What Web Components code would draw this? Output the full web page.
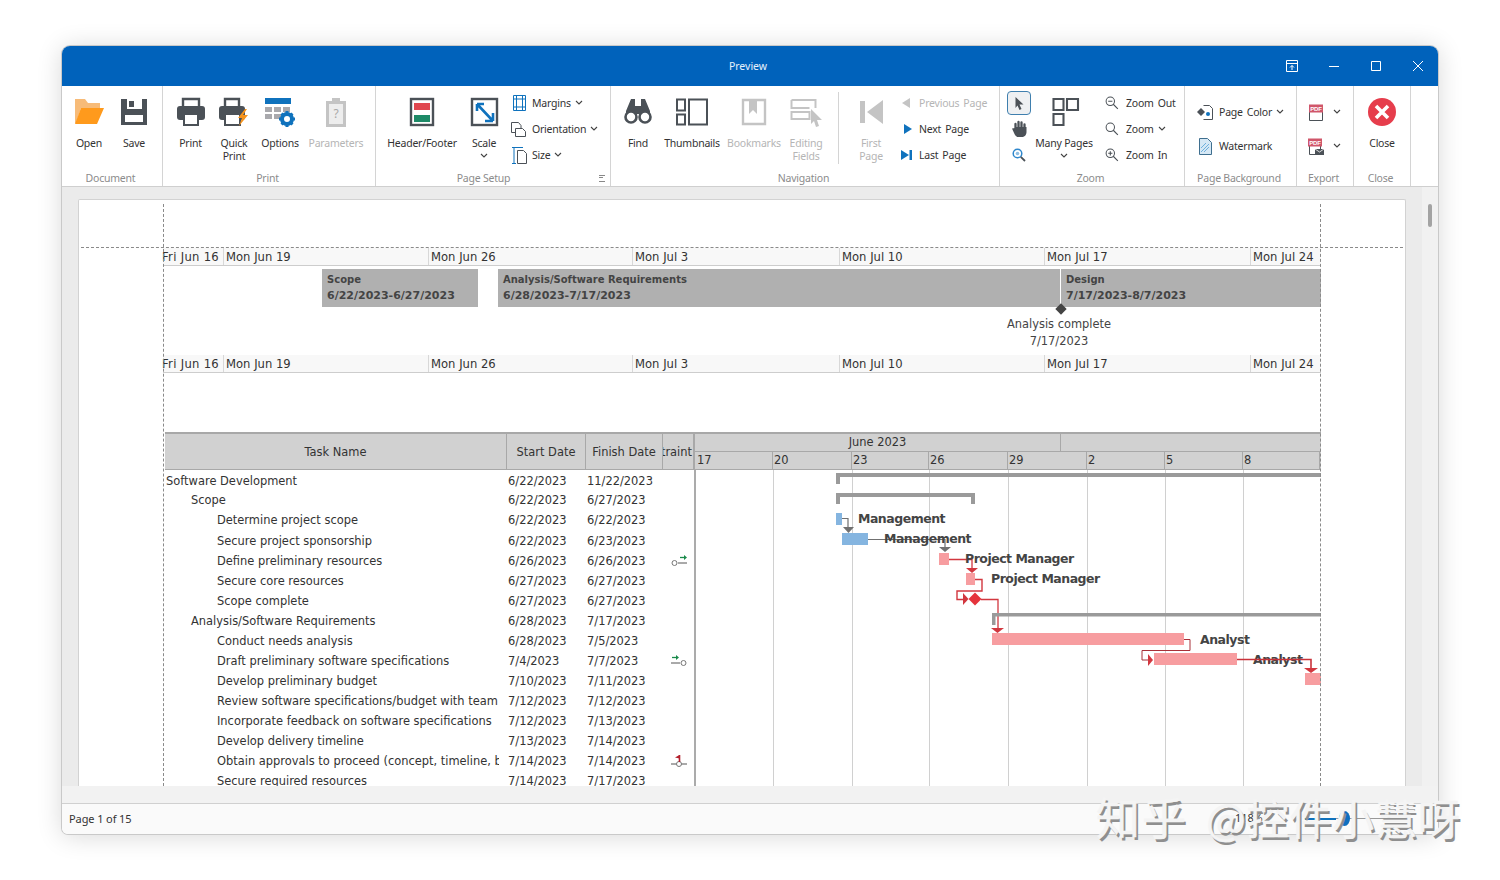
<!DOCTYPE html>
<html>
<head>
<meta charset="utf-8">
<title>Preview</title>
<style>
  html, body { margin: 0; height: 880px; overflow: hidden; background: #fff; }
  body { padding: 46px 62px 0; box-sizing: border-box; font-family: "Noto Sans", sans-serif; }
</style>
</head>
<body>
<app-window>
  <title-bar slot="title">Preview</title-bar>

  <rb-ribbon slot="ribbon">
    <rb-group label="Document" style="width:100px;padding-left:5px">
      <rb-large w="44"><ui-icon name="open"></ui-icon><span slot="label">Open</span></rb-large>
      <rb-large w="46"><ui-icon name="save"></ui-icon><span slot="label">Save</span></rb-large>
    </rb-group>
    <rb-group label="Print" style="width:212px;padding-left:5px">
      <rb-large w="45"><ui-icon name="print"></ui-icon><span slot="label">Print</span></rb-large>
      <rb-large w="42"><ui-icon name="quick"></ui-icon><span slot="label">Quick<br>Print</span></rb-large>
      <rb-large w="50"><ui-icon name="options"></ui-icon><span slot="label">Options</span></rb-large>
      <rb-large w="62" disabled><ui-icon name="params"></ui-icon><span slot="label">Parameters</span></rb-large>
    </rb-group>
    <rb-group label="Page Setup" dialog style="width:234px;padding-left:4px">
      <rb-large w="84"><ui-icon name="headfoot"></ui-icon><span slot="label">Header/Footer</span></rb-large>
      <rb-large w="40" chevron><ui-icon name="scale"></ui-icon><span slot="label">Scale</span></rb-large>
      <rb-stack style="margin-left:5px">
        <rb-small chevron><ui-icon name="margins" size="18"></ui-icon>Margins</rb-small>
        <rb-small chevron><ui-icon name="orient" size="18"></ui-icon>Orientation</rb-small>
        <rb-small chevron><ui-icon name="size" size="18"></ui-icon>Size</rb-small>
      </rb-stack>
    </rb-group>
    <rb-group label="Navigation" style="width:388px;padding-left:8px">
      <rb-large w="38"><ui-icon name="find"></ui-icon><span slot="label">Find</span></rb-large>
      <rb-large w="70"><ui-icon name="thumbs"></ui-icon><span slot="label">Thumbnails</span></rb-large>
      <rb-large w="54" disabled><ui-icon name="bookmarks"></ui-icon><span slot="label">Bookmarks</span></rb-large>
      <rb-large w="50" disabled><ui-icon name="fields"></ui-icon><span slot="label">Editing<br>Fields</span></rb-large>
      <rb-sep></rb-sep>
      <rb-large w="40" disabled><ui-icon name="first"></ui-icon><span slot="label">First<br>Page</span></rb-large>
      <rb-stack style="margin-left:5px">
        <rb-small disabled><ui-icon name="prev" size="18"></ui-icon>Previous Page</rb-small>
        <rb-small><ui-icon name="next" size="18"></ui-icon>Next Page</rb-small>
        <rb-small><ui-icon name="last" size="18"></ui-icon>Last Page</rb-small>
      </rb-stack>
    </rb-group>
    <rb-group label="Zoom" style="width:184px;padding-left:7px">
      <rb-stack>
        <rb-tool active><ui-icon name="cursor" size="18"></ui-icon></rb-tool>
        <rb-tool><ui-icon name="hand" size="18"></ui-icon></rb-tool>
        <rb-tool><ui-icon name="zoomtool" size="18"></ui-icon></rb-tool>
      </rb-stack>
      <rb-large w="64" chevron style="margin-left:1px"><ui-icon name="many"></ui-icon><span slot="label">Many Pages</span></rb-large>
      <rb-stack style="margin-left:7px">
        <rb-small><ui-icon name="zoomout" size="18"></ui-icon>Zoom Out</rb-small>
        <rb-small chevron><ui-icon name="zoom" size="18"></ui-icon>Zoom</rb-small>
        <rb-small><ui-icon name="zoomin" size="18"></ui-icon>Zoom In</rb-small>
      </rb-stack>
    </rb-group>
    <rb-group label="Page Background" style="width:111px;padding-left:11px">
      <rb-stack two>
        <rb-small chevron><ui-icon name="pagecolor" size="18"></ui-icon>Page Color</rb-small>
        <rb-small><ui-icon name="watermark" size="18"></ui-icon>Watermark</rb-small>
      </rb-stack>
    </rb-group>
    <rb-group label="Export" style="width:56px;padding-left:9px">
      <rb-stack two>
        <rb-small chevron wide><ui-icon name="pdf" size="18"></ui-icon></rb-small>
        <rb-small chevron wide><ui-icon name="pdfmail" size="18"></ui-icon></rb-small>
      </rb-stack>
    </rb-group>
    <rb-group label="Close" style="width:56px;padding-left:3px">
      <rb-large w="50"><ui-icon name="close"></ui-icon><span slot="label">Close</span></rb-large>
    </rb-group>
  </rb-ribbon>

  <doc-view slot="view">
    <report-page>
      <time-band></time-band>
      <summary-band></summary-band>
      <time-band></time-band>
      <gantt-sheet></gantt-sheet>
    </report-page>
  </doc-view>

  <status-bar slot="status">Page 1 of 15</status-bar>
</app-window>
<zh-watermark><span>知乎</span> @控件小慧呀</zh-watermark>

<script>
const DARK = "#4b5157", OFF = "#c4c4c4", BLUE = "#0f72bd";
const SHRINK = (s) => `<g transform="translate(1 1) scale(.84)">${s}</g>`;

const ICONS = {
  open: `<path d="M2 3h10l3 4h12v5H8L3 27H2z" fill="#f7bb78"/><path d="M8 12h23l-7 16H2z" fill="#ff9a1c"/>`,
  save: `<path fill-rule="evenodd" d="M3 3h26v26H3zM9 3v10h15V3zM7 19v7h18v-7z" fill="${DARK}"/><path d="M11 5h5v6h-5z" fill="${DARK}"/>`,
  print: `<path d="M8 11V3h16v8" fill="none" stroke="${DARK}" stroke-width="2.4"/><rect x="2" y="10" width="28" height="14" rx="3" fill="${DARK}"/><rect x="9" y="18" width="14" height="11" fill="#fff" stroke="${DARK}" stroke-width="2"/>`,
  quick: `<path d="M7 11V3h14v8" fill="none" stroke="${DARK}" stroke-width="2.4"/><rect x="1" y="10" width="26" height="14" rx="3" fill="${DARK}"/><rect x="7" y="18" width="15" height="11" fill="#fff" stroke="${DARK}" stroke-width="2"/><path d="M27 13l-7 9h4l-3 8 9-11h-5l4-6z" fill="#f7941d"/>`,
  options: `<rect x="1" y="2" width="26" height="6" fill="${BLUE}"/><path d="M1 11h7v5H1zM10 11h7v5h-7zM19 11h7v5h-7zM1 18h7v5H1zM10 18h7v5h-7z" fill="#a9a9ad"/><g transform="translate(23 23)"><circle r="5" fill="none" stroke="${BLUE}" stroke-width="4"/><path d="M-1.500-8h3v3h-3zM-1.500 5h3v3h-3zM-8-1.500h3v3h-3zM5-1.500h3v3H5zM-6.500-4.500l2-2 2 2-2 2zM4.500-6.500l2 2-2 2-2-2zM-6.500 4.500l2 2 2-2-2-2zM4.500 6.500l2-2-2-2-2 2z" fill="${BLUE}"/></g>`,
  params: `<path d="M6 5h6V2h8v3h6v26H6z" fill="${OFF}"/><path d="M9 8h14v20H9z" fill="#ededed"/><text x="16" y="22" font-size="12" text-anchor="middle" fill="#a8a8a8" font-family="Noto Sans">?</text>`,
  headfoot: `<rect x="5" y="3" width="22" height="26" fill="#fff" stroke="${DARK}" stroke-width="2.4"/><rect x="8" y="7" width="16" height="7" fill="#e0474f"/><rect x="8" y="19" width="16" height="7" fill="#1d8a67"/>`,
  scale: `<rect x="4" y="3" width="25" height="26" fill="#fff" stroke="${DARK}" stroke-width="2.4"/><path d="M9 8l16 17M9 8v7M9 8h7M25 25v-8M25 25h-8" fill="none" stroke="${BLUE}" stroke-width="2.6"/>`,
  margins: `<path d="M4.500 1.500h12v15h-12zM4.500 5h12M4.500 13h12M7.500 1.500v15M13.500 1.500v15" fill="none" stroke="${BLUE}" stroke-width="1"/>`,
  orient: `<path d="M2.500 2.500h7l2.500 3v3M2.500 2.500v10h4" fill="none" stroke="${DARK}"/><path d="M6.500 8.500h7l3 3v5h-10z" fill="#fff" stroke="${DARK}"/>`,
  size: `<path d="M3 1.500h11M3 17.500h4M5 1.500v16" fill="none" stroke="${BLUE}"/><path d="M8.500 4.500h6l3 3v10h-9z" fill="#fff" stroke="${DARK}"/>`,
  find: `<path d="M9 3h4v7h6V3h4l5 12v3H4v-3z" fill="${DARK}"/><circle cx="9" cy="21" r="5.500" fill="#fff" stroke="${DARK}" stroke-width="2.6"/><circle cx="23" cy="21" r="5.500" fill="#fff" stroke="${DARK}" stroke-width="2.6"/><path d="M13 10h6v6h-6z" fill="${DARK}"/>`,
  thumbs: `<path d="M1 2.500h8v11H1zM1 17.500h8v10H1zM13 2.500h18v25H13z" fill="none" stroke="${DARK}" stroke-width="2" transform="translate(0 1)"/>`,
  bookmarks: `<path d="M5 4h22v24H5z" fill="none" stroke="${OFF}" stroke-width="2.4"/><path d="M11 3h8v15l-4-4-4 4z" fill="${OFF}"/>`,
  fields: `<path d="M1.500 4h24v8M1.500 4v8h18M1.500 16h18v7h-18z" fill="none" stroke="${OFF}" stroke-width="2"/><path d="M21 13l11 11-5 0 2 6-3 1-2-6-3 3z" fill="${OFF}"/>`,
  first: `<path d="M5 5h5v22H5zM28 4v24L12 16z" fill="${OFF}"/>`,
  prev: `<path d="M14 4v10L6 9z" fill="${OFF}"/>`,
  next: `<path d="M8 4v10l8-5z" fill="${BLUE}"/>`,
  last: `<path d="M5 4v10l8-5z" fill="${BLUE}"/><rect x="13.500" y="4" width="2.500" height="10" fill="${BLUE}"/>`,
  cursor: `<path d="M5.500 3l8 7.500H9.500l2 4.500-2 1-2-4.500-2 2.500z" fill="${DARK}"/>`,
  hand: `<path d="M5.500 8V4M8.500 8V2M11.500 8V2.500M14.500 9V4.500" stroke="${DARK}" stroke-width="2.300" stroke-linecap="round"/><path d="M2 8.500l3-.5V7h11.500v5c0 3-2 5-5 5H8.500c-2 0-3-1-4-3z" fill="${DARK}"/>`,
  zoomtool: `<circle cx="7.500" cy="7.500" r="4.300" fill="none" stroke="#2f87cc" stroke-width="1.500"/><circle cx="7.500" cy="7.500" r="1.800" fill="#8dbde2"/><path d="M10.800 10.800l4.200 4.200" stroke="${DARK}" stroke-width="1.800"/>`,
  many: `<path d="M5.500 3h10v11h-10zM19 3h11v11H19zM5.500 18h10v11h-10z" fill="none" stroke="${DARK}" stroke-width="2.100"/>`,
  zoomout: SHRINK(`<circle cx="7.500" cy="7.500" r="5" fill="none" stroke="${DARK}" stroke-width="1.200"/><path d="M5 7.500h5M11 11l5.500 5.500" stroke="${DARK}" stroke-width="1.300"/>`),
  zoom: SHRINK(`<circle cx="7.500" cy="7.500" r="5" fill="none" stroke="${DARK}" stroke-width="1.200"/><path d="M11 11l5.500 5.500" stroke="${DARK}" stroke-width="1.300"/>`),
  zoomin: SHRINK(`<circle cx="7.500" cy="7.500" r="5" fill="none" stroke="${DARK}" stroke-width="1.200"/><path d="M5 7.500h5M7.500 5v5M11 11l5.500 5.500" stroke="${DARK}" stroke-width="1.300"/>`),
  pagecolor: `<path d="M7.500 2.500h6l3 3v11h-9" fill="#fff" stroke="${DARK}"/><path d="M1 9l4-4 4 4-4 4z" fill="${DARK}"/><circle cx="12" cy="11" r="2" fill="${BLUE}"/>`,
  watermark: `<path d="M3.500 1.500h8l4 4v12h-12z" fill="#d6e8f5" stroke="#3f6f8f"/><path d="M5 15l8-8M5 11l5-5M8 15l5-5" stroke="#6fb0dc"/>`,
  pdf: `<path d="M3.500 5.500h13v12h-13z" fill="#fff" stroke="${DARK}"/><rect x="3" y="1.500" width="14" height="8" fill="#d0566a"/><text x="10" y="8.300" font-size="6" font-weight="700" text-anchor="middle" fill="#fff" font-family="Liberation Sans">PDF</text>`,
  pdfmail: `<path d="M3.500 5.500h11v12h-11z" fill="#fff" stroke="${DARK}"/><rect x="2" y="1.500" width="14" height="8" fill="#d0566a"/><text x="9" y="8.300" font-size="6" font-weight="700" text-anchor="middle" fill="#fff" font-family="Liberation Sans">PDF</text><rect x="9" y="12" width="9" height="6" fill="${DARK}"/><path d="M9 12l4.500 3 4.500-3" fill="none" stroke="#fff" stroke-width=".8"/>`,
  close: `<circle cx="16" cy="16" r="14" fill="#e63d4c"/><path d="M10 10l12 12M22 10L10 22" stroke="#fff" stroke-width="3.600"/>`,
};

class UIIcon extends HTMLElement {
  connectedCallback() {
    const name = this.getAttribute("name");
    const size = this.getAttribute("size") || 32;
    this.attachShadow({ mode: "open" }).innerHTML = `
      <style>:host { display: block; width: ${size}px; height: ${size}px; flex: none; } svg { display: block; }</style>
      <svg width="${size}" height="${size}" viewBox="0 0 ${size} ${size}">${ICONS[name] || ""}</svg>`;
  }
}

const CHEVRON = `<svg width="8" height="6" viewBox="0 0 8 6"><path d="M1 1l3 3 3-3" fill="none" stroke="#444" stroke-width="1.100"/></svg>`;

class AppWindow extends HTMLElement {
  constructor() {
    super();
    this.attachShadow({ mode: "open" }).innerHTML = `
      <style>
        :host {
          display: flex; flex-direction: column; width: 1376px; height: 788px;
          border-radius: 8px 8px 6px 6px; background: #fff; overflow: hidden;
          box-shadow: 0 0 0 1px #c9c9c9, 0 2px 26px rgba(0,0,0,.16);
        }
        .view { flex: 1; min-height: 0; display: flex; }
        .hbar { height: 17px; background: #f2f2f2; border-bottom: 1px solid #d0d0d0; flex: none; }
      </style>
      <slot name="title"></slot>
      <slot name="ribbon"></slot>
      <div class="view"><slot name="view"></slot></div>
      <div class="hbar"></div>
      <slot name="status"></slot>`;
  }
}

class TitleBar extends HTMLElement {
  constructor() {
    super();
    this.attachShadow({ mode: "open" }).innerHTML = `
      <style>
        :host {
          display: flex; align-items: center; height: 40px; flex: none; background: #0062bb;
          color: #e6f1fb; font: 10.500px "Noto Sans", sans-serif; position: relative;
        }
        .t { flex: 1; text-align: center; padding-right: 4px; }
        .btns { position: absolute; right: -1px; top: 0; height: 40px; display: flex; align-items: center; }
        .btns span { width: 42px; display: flex; justify-content: center; }
        .btns span:first-child { width: 43px; }
        svg { display: block; }
      </style>
      <div class="t"><slot></slot></div>
      <div class="btns">
        <span><svg width="12" height="12" viewBox="0 0 12 12" fill="none" stroke="#fff"><path d="M.5.5h11v11H.5zM.5 3.500h11M6 10V5.500M4 7.500l2-2 2 2"/></svg></span>
        <span><svg width="12" height="12" viewBox="0 0 12 12" stroke="#fff"><path d="M1 6.500h10"/></svg></span>
        <span><svg width="12" height="12" viewBox="0 0 12 12" fill="none" stroke="#fff"><path d="M1.500 1.500h9v9h-9z"/></svg></span>
        <span><svg width="12" height="12" viewBox="0 0 12 12" stroke="#fff"><path d="M1 1l10 10M11 1L1 11"/></svg></span>
      </div>`;
  }
}

class RbRibbon extends HTMLElement {
  constructor() {
    super();
    this.attachShadow({ mode: "open" }).innerHTML = `
      <style>
        :host {
          display: flex; height: 100px; flex: none; background: #fff; border-bottom: 1px solid #cfcfcf;
          color: #333; font: 10.500px/13px "Noto Sans", sans-serif; letter-spacing: -.22px;
        }
      </style><slot></slot>`;
  }
}

class RbGroup extends HTMLElement {
  constructor() {
    super();
    const dialog = this.hasAttribute("dialog");
    this.attachShadow({ mode: "open" }).innerHTML = `
      <style>
        :host {
          display: flex; flex-direction: column; flex: none; position: relative;
          border-right: 1px solid #d4d4d4; box-sizing: content-box;
        }
        .body { flex: 1; display: flex; align-items: stretch; min-height: 0; }
        .cap { height: 16px; margin-left: calc(-1 * var(--pl, 0px)); padding-right: ${dialog ? 19 : 3}px; text-align: center; color: #8c8c8c; line-height: 17px; }
        .dlg { position: absolute; right: 5px; bottom: 4px; width: 6px; height: 5px;
          border-top: 1px solid #888; border-bottom: 1px solid #888; }
        .dlg::after { content: ""; display: block; height: 1px; width: 4px; background: #888; margin-top: 1px; }
      </style>
      <div class="body"><slot></slot></div>
      <div class="cap">${this.getAttribute("label")}</div>
      ${dialog ? '<div class="dlg"></div>' : ""}`;
  }
  connectedCallback() {
    // the caption is centred on the whole group, padding included
    const pl = this.style.paddingLeft;
    if (pl) this.shadowRoot.querySelector(".cap").style.setProperty("--pl", pl);
    const w = parseInt(this.style.width);
    if (pl && w) this.style.width = (w - parseInt(pl)) + "px";
  }
}

class RbLarge extends HTMLElement {
  constructor() {
    super();
    const w = this.getAttribute("w");
    this.attachShadow({ mode: "open" }).innerHTML = `
      <style>
        :host { display: flex; flex-direction: column; align-items: center; width: ${w}px; flex: none;
          padding-top: 10px; box-sizing: border-box; text-align: center; white-space: nowrap; }
        :host([disabled]) { color: #b5b5b5; }
        .lb { margin-top: 9px; }
        .ch { height: 12px; display: flex; align-items: center; justify-content: center; }
      </style>
      <slot></slot>
      <div class="lb"><slot name="label"></slot></div>
      ${this.hasAttribute("chevron") ? `<div class="ch">${CHEVRON}</div>` : ""}`;
  }
}

class RbStack extends HTMLElement {
  constructor() {
    super();
    this.attachShadow({ mode: "open" }).innerHTML = `
      <style>
        :host { display: flex; flex-direction: column; padding-top: 4px; flex: none; }
        :host([two]) { padding-top: 13px; gap: 8px; }
      </style><slot></slot>`;
  }
}

class RbSmall extends HTMLElement {
  constructor() {
    super();
    this.attachShadow({ mode: "open" }).innerHTML = `
      <style>
        :host { display: flex; align-items: center; height: 26px; gap: 5px; white-space: nowrap; word-spacing: 1.500px; }
        :host([disabled]) { color: #b5b5b5; }
        .ch { margin-left: -1px; display: block; height: 6px; }
        :host([wide]) .ch { margin-left: 4px; }
        svg { display: block; }
      </style>
      <slot></slot>${this.hasAttribute("chevron") ? `<span class="ch">${CHEVRON}</span>` : ""}`;
  }
}

class RbTool extends HTMLElement {
  constructor() {
    super();
    this.attachShadow({ mode: "open" }).innerHTML = `
      <style>
        :host { display: flex; align-items: center; justify-content: center; width: 24px; height: 26px; box-sizing: border-box; }
        :host([active]) { background: #eef0f2; border: 1px solid #3f7fae; border-radius: 4px; height: 24px; margin-top: 1px; margin-bottom: 1px; }
      </style><slot></slot>`;
  }
}

class RbSep extends HTMLElement {
  constructor() {
    super();
    this.attachShadow({ mode: "open" }).innerHTML = `
      <style>:host { display: block; width: 1px; height: 72px; margin: 6px 12px 0 7px; background: #d4d4d4; flex: none; }</style>`;
  }
}

class DocView extends HTMLElement {
  constructor() {
    super();
    this.attachShadow({ mode: "open" }).innerHTML = `
      <style>
        :host { display: flex; flex: 1; min-width: 0; height: 100%; background: #ebebeb; box-sizing: border-box; padding: 12px 0 0 16px; overflow: hidden; }
        .sb { width: 16px; margin-left: auto; margin-top: -12px; background: #f1f1f1; flex: none; position: relative; }
        .th { position: absolute; left: 6px; top: 17px; width: 4px; height: 23px; background: #a3a3a3; border-radius: 2px; }
      </style>
      <slot></slot>
      <div class="sb"><div class="th"></div></div>`;
  }
}

class ReportPage extends HTMLElement {
  constructor() {
    super();
    this.attachShadow({ mode: "open" }).innerHTML = `
      <style>
        :host {
          display: block; position: relative; width: 1328px; box-sizing: border-box; flex: none;
          background: #fff; border: 1px solid #d2d2d2; border-bottom: 0; border-radius: 2px 2px 0 0;
          padding: 48px 0 0 84px; overflow: hidden;
          color: #333; font: 11.450px "DejaVu Sans", sans-serif;
        }
        .inner { width: 1158px; }
        .mx { position: absolute; top: 4px; bottom: 0; border-left: 1px dashed #8a8a8a; }
        .my { position: absolute; left: 2px; right: 2px; top: 47px; border-top: 1px dashed #8a8a8a; }
      </style>
      <div class="inner"><slot></slot></div>
      <div class="mx" style="left:84px"></div>
      <div class="mx" style="left:1241px"></div>
      <div class="my"></div>`;
  }
}

class TimeBand extends HTMLElement {
  constructor() {
    super();
    const cells = [["Fri Jun 16", 61], ["Mon Jun 19", 205], ["Mon Jun 26", 204], ["Mon Jul 3", 207],
      ["Mon Jul 10", 205], ["Mon Jul 17", 206], ["Mon Jul 24", 70]];
    this.attachShadow({ mode: "open" }).innerHTML = `
      <style>
        :host { display: flex; height: 18px; box-sizing: border-box; background: #f8f8f8; border-bottom: 1px solid #cdcdcd; line-height: 18px; color: #333; font-size: 11.600px; }
        div { box-sizing: border-box; padding-left: 2px; border-left: 1px solid #d8d8d8; white-space: nowrap; overflow: hidden; }
        style + div { border-left: 0; padding-left: 0; margin-left: -1px; letter-spacing: .3px; }
      </style>
      ${cells.map(([t, w]) => `<div style="width:${w}px">${t}</div>`).join("")}`;
  }
}

class SummaryBand extends HTMLElement {
  constructor() {
    super();
    const bars = [
      ["Scope", "6/22/2023-6/27/2023", 159, 156],
      ["Analysis/Software Requirements", "6/28/2023-7/17/2023", 335, 562],
      ["Design", "7/17/2023-8/7/2023", 898, 260],
    ];
    this.attachShadow({ mode: "open" }).innerHTML = `
      <style>
        :host { display: block; position: relative; height: 86px; margin-top: 3px; }
        .b { position: absolute; top: 0; height: 38px; background: #b0b0b0; color: #444; font-weight: 700;
          font-size: 11px; line-height: 16px; padding: 3px 0 0 5px; box-sizing: border-box; white-space: nowrap; overflow: hidden; }
        .b span { font-size: 10px; }
        .d { position: absolute; left: 894px; top: 36px; width: 8px; height: 8px; background: #444; transform: rotate(45deg); }
        .m { position: absolute; left: 796px; width: 200px; top: 47px; text-align: center; line-height: 17px; color: #444; }
      </style>
      ${bars.map(([a, b, x, w]) => `<div class="b" style="left:${x}px;width:${w}px"><span>${a}</span><br>${b}</div>`).join("")}
      <div class="d"></div>
      <div class="m">Analysis complete<br>7/17/2023</div>`;
  }
}

const TASKS = [
  [0, "Software Development", "6/22/2023", "11/22/2023", 20],
  [1, "Scope", "6/22/2023", "6/27/2023", 18.5],
  [2, "Determine project scope", "6/22/2023", "6/22/2023", 20.5],
  [2, "Secure project sponsorship", "6/22/2023", "6/23/2023", 21],
  [2, "Define preliminary resources", "6/26/2023", "6/26/2023", 20, "snet"],
  [2, "Secure core resources", "6/27/2023", "6/27/2023", 20],
  [2, "Scope complete", "6/27/2023", "6/27/2023", 20],
  [1, "Analysis/Software Requirements", "6/28/2023", "7/17/2023", 20],
  [2, "Conduct needs analysis", "6/28/2023", "7/5/2023", 20],
  [2, "Draft preliminary software specifications", "7/4/2023", "7/7/2023", 20, "fnet"],
  [2, "Develop preliminary budget", "7/10/2023", "7/11/2023", 20],
  [2, "Review software specifications/budget with team", "7/12/2023", "7/12/2023", 20],
  [2, "Incorporate feedback on software specifications", "7/12/2023", "7/13/2023", 20],
  [2, "Develop delivery timeline", "7/13/2023", "7/14/2023", 20],
  [2, "Obtain approvals to proceed (concept, timeline, budget)", "7/14/2023", "7/14/2023", 20, "must"],
  [2, "Secure required resources", "7/14/2023", "7/17/2023", 20],
];

const CONSTRAINTS = {
  snet: `<path d="M8 9h9" stroke="#555"/><circle cx="4.500" cy="9" r="2.500" fill="#fff" stroke="#777"/><path d="M10 3.500h5" stroke="#1a8a4a" stroke-width="1.300"/><path d="M14 1l3 2.500-3 2.500z" fill="#1a8a4a"/>`,
  fnet: `<path d="M1 9h9" stroke="#555"/><circle cx="13.500" cy="9" r="2.500" fill="#fff" stroke="#777"/><path d="M2 3.500h5" stroke="#1a8a4a" stroke-width="1.300"/><path d="M6 1l3 2.500L6 6z" fill="#1a8a4a"/>`,
  must: `<path d="M1 10h16" stroke="#555"/><circle cx="9" cy="10" r="2.500" fill="#fff" stroke="#777"/><path d="M9.500 1v7" stroke="#b3202c" stroke-width="1.600"/><path d="M9.500 1L5 3.500l4.500 1z" fill="#b3202c"/>`,
};

class GanttSheet extends HTMLElement {
  constructor() {
    super();
    const days = [["17", 78], ["20", 79], ["23", 77], ["26", 79], ["29", 79], ["2", 78], ["5", 78], ["8", 77]];
    const lines = [773, 852, 929, 1008, 1087, 1165, 1243];
    const pink = "#f79da0", blue = "#85b5e0", red = "#d2373f", gray = "#707070", sum = "#9a9a9a";
    const bar = (x, y, w, h, c) => `<rect x="${x}" y="${y}" width="${w}" height="${h}" fill="${c}"/>`;
    const tri = (pts, c) => `<polygon points="${pts}" fill="${c}"/>`;
    const link = (d, c, sw) => `<path d="${d}" fill="none" stroke="${c}" stroke-width="${sw}"/>`;
    const lbl = (x, y, t) => `<text x="${x}" y="${y}" font-family="DejaVu Sans" font-weight="700" font-size="12.500" letter-spacing="-.5" fill="#444">${t}</text>`;
    this.attachShadow({ mode: "open" }).innerHTML = `
      <style>
        :host { display: block; margin-top: 59px; }
        .head { display: flex; height: 38px; box-sizing: border-box; background: #d1d1d1; border-top: 2px solid #a8a8a8; border-bottom: 1px solid #a8a8a8; margin-left: 2px; }
        .hc { box-sizing: border-box; border-right: 1px solid #a8a8a8; display: flex; align-items: center; justify-content: center; white-space: nowrap; overflow: hidden; flex: none; }
        .hc.tr { justify-content: flex-end; padding-right: 1px; border-right: 2px solid #a8a8a8; }
        .cal { flex: 1; display: flex; flex-direction: column; }
        .mon { height: 17px; display: flex; border-bottom: 1px solid #a8a8a8; line-height: 17px; box-sizing: content-box; flex: none; }
        .mon div { text-align: center; }
        .mon div:first-child { width: 365px; border-right: 1px solid #a8a8a8; }
        .daysrow { flex: 1; display: flex; line-height: 17px; }
        .daysrow div { box-sizing: border-box; padding-left: 1px; border-right: 1px solid #a8a8a8; }
        .daysrow div:first-child { padding-left: 2px; }
        .body { display: flex; }
        .tbl { width: 531px; flex: none; padding-top: 1px; box-sizing: border-box; }
        .row { display: grid; grid-template-columns: 342px 79px 77px 32px; align-items: center; white-space: nowrap; }
        .row .name { overflow: hidden; margin-right: 6px; }
        .row svg { display: block; margin: 0 0 0 9px; }
        .chart { display: block; flex: none; }
      </style>
      <div class="head">
        <div class="hc" style="width:342px">Task Name</div>
        <div class="hc" style="width:79px">Start Date</div>
        <div class="hc" style="width:77px">Finish Date</div>
        <div class="hc tr" style="width:32px">traint</div>
        <div class="cal">
          <div class="mon"><div>June 2023</div><div></div></div>
          <div class="daysrow">${days.map(([d, w]) => `<div style="width:${w}px">${d}</div>`).join("")}</div>
        </div>
      </div>
      <div class="body">
        <div class="tbl">
          ${TASKS.map(([lvl, name, s, f, h, c]) => `
            <div class="row" style="height:${h}px">
              <div class="name" style="padding-left:${[3, 28, 54][lvl]}px">${name}</div>
              <div style="padding-left:3px">${s}</div>
              <div style="padding-left:3px">${f}</div>
              <div>${c ? `<svg width="18" height="14" viewBox="0 0 18 14">${CONSTRAINTS[c]}</svg>` : ""}</div>
            </div>`).join("")}
        </div>
        <svg class="chart" width="627" height="330" viewBox="694 470 627 330">
          <rect x="694" y="470" width="2" height="330" fill="#ababab"/>
          ${lines.map(x => `<rect x="${x}" y="470" width="1" height="330" fill="#d0d0d0"/>`).join("")}

          ${bar(836, 473, 485, 4, sum)}${bar(836, 473, 4, 11, sum)}
          ${bar(836, 493, 139, 4, sum)}${bar(836, 493, 4, 11, sum)}${bar(971, 493, 4, 11, sum)}

          ${bar(836, 513, 6, 12, blue)}
          ${link("M842 518.500h6v9", gray, 1.200)}${tri("843,527 854,527 848.500,533", gray)}
          ${bar(842, 533, 26, 12, blue)}
          ${lbl(858, 523, "Management")}
          ${link("M868 539.500h77v8", gray, 1.200)}${tri("939,547 951,547 945,552", gray)}
          ${lbl(884, 543, "Management")}

          ${bar(939, 553, 10, 12, pink)}
          ${link("M949 559.500h23v9", red, 1.300)}${tri("966,568 978,568 972,573", red)}
          ${lbl(965, 563, "Project Manager")}
          ${bar(966, 573, 9, 12, pink)}
          ${lbl(991, 583, "Project Manager")}
          ${link("M975 579.500h7v11.500h-25v8.500h6", red, 1.400)}${tri("963,593 968.500,599 963,605", red)}
          ${tri("975,592.500 981.500,599 975,605.500 968.500,599", "#e5343c")}
          ${link("M981 599.500h17v29", red, 1.300)}${tri("991,628 1004,628 997.500,633", red)}

          ${bar(992, 613, 329, 3.500, sum)}${bar(992, 613, 3.500, 12, sum)}

          ${bar(992, 633, 192, 12, pink)}
          ${lbl(1200, 644, "Analyst")}
          ${link("M1184 639.500h6v11h-48v9.500h7", "#a83038", 1)}${tri("1148,654 1153,660 1148,666", red)}
          ${bar(1154, 653, 83, 12, pink)}
          ${lbl(1253, 664, "Analyst")}
          ${link("M1237 659.500h74v9", "#c9323a", 1.600)}${tri("1304,668 1318,668 1311,673", red)}
          ${bar(1305, 673, 16, 12, pink)}
        </svg>
      </div>`;
  }
}

class StatusBar extends HTMLElement {
  constructor() {
    super();
    this.attachShadow({ mode: "open" }).innerHTML = `
      <style>
        :host { display: flex; align-items: center; height: 30px; box-sizing: border-box; flex: none; padding: 0 0 2px 7px; position: relative; background: #fafafa; color: #333; font: 11px "Noto Sans", sans-serif; letter-spacing: -.1px; }
        .z { position: absolute; left: 1173px; top: 6px; font-size: 11px; }
        .tr { position: absolute; left: 1243px; top: 14px; width: 80px; height: 1px; background: #999; }
        .fill { position: absolute; left: 1243px; top: 14px; width: 31px; height: 2px; background: #0f72bd; }
        .th { position: absolute; left: 1277px; top: 7px; width: 11px; height: 15px; border-radius: 50%; background: #0f6fbf; }
      </style>
      <slot></slot>
      <span class="z">118%</span><div class="tr"></div><div class="fill"></div><div class="th"></div>`;
  }
}

class ZhWatermark extends HTMLElement {
  constructor() {
    super();
    this.attachShadow({ mode: "open" }).innerHTML = `
      <style>
        :host {
          position: absolute; left: 1096px; top: 786px; white-space: nowrap; word-spacing: 8px; letter-spacing: .8px;
          font: 400 42px/60px "Noto Sans CJK SC", sans-serif; color: #f4f4f4;
          -webkit-text-stroke: .4px #f4f4f4; text-shadow: 2px 3px 0 #8f8f8f;
        }
        ::slotted(span) { font-size: 44px; letter-spacing: 2px; }
      </style><slot></slot>`;
  }
}

customElements.define("ui-icon", UIIcon);
customElements.define("app-window", AppWindow);
customElements.define("title-bar", TitleBar);
customElements.define("rb-ribbon", RbRibbon);
customElements.define("rb-group", RbGroup);
customElements.define("rb-large", RbLarge);
customElements.define("rb-stack", RbStack);
customElements.define("rb-small", RbSmall);
customElements.define("rb-tool", RbTool);
customElements.define("rb-sep", RbSep);
customElements.define("doc-view", DocView);
customElements.define("report-page", ReportPage);
customElements.define("time-band", TimeBand);
customElements.define("summary-band", SummaryBand);
customElements.define("gantt-sheet", GanttSheet);
customElements.define("status-bar", StatusBar);
customElements.define("zh-watermark", ZhWatermark);
</script>
</body>
</html>
